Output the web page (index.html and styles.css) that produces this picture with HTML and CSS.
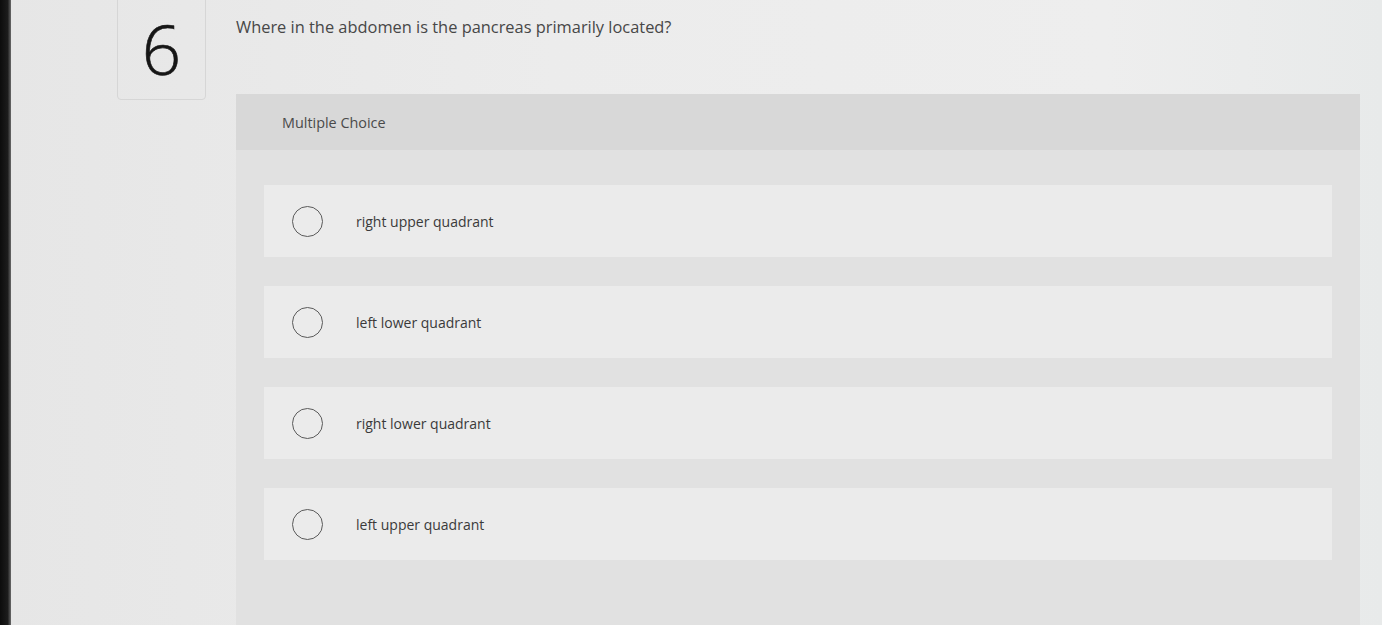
FILE: index.html
```html
<!DOCTYPE html>
<html>
<head>
<meta charset="utf-8">
<link rel="stylesheet" href="styles.css">
</head>
<body>
<div class="screen">
  <div class="edge"></div>
  <div class="main">
    <div class="num-col">
      <div class="num-box">6</div>
    </div>
    <div class="content">
      <div class="question">Where in the abdomen is the pancreas primarily located?</div>
      <div class="card">
        <div class="card-head">Multiple Choice</div>
        <div class="options">
          <div class="option"><span class="radio"></span><span class="label">right upper quadrant</span></div>
          <div class="option"><span class="radio"></span><span class="label">left lower quadrant</span></div>
          <div class="option"><span class="radio"></span><span class="label">right lower quadrant</span></div>
          <div class="option"><span class="radio"></span><span class="label">left upper quadrant</span></div>
        </div>
      </div>
    </div>
  </div>
</div>
</body>
</html>
```

FILE: styles.css
```css
* { box-sizing: border-box; }
html, body { margin: 0; padding: 0; }
body {
  width: 1382px;
  height: 625px;
  overflow: hidden;
  font-family: "Open Sans", "Lato", sans-serif;
  background: #e9e9e9;
}
.screen {
  display: flex;
  height: 625px;
  background: linear-gradient(90deg, #e6e6e6 0%, #ececec 40%, #eeeeee 80%, #e8eaea 100%);
}
.edge {
  width: 11px;
  flex: none;
  background: linear-gradient(90deg, #0c0c0c 0%, #1c1c1c 70%, #6a6a6a 100%);
}
.main {
  display: flex;
  flex: 1;
}
.num-col {
  width: 225px;
  flex: none;
  padding-left: 106px;
}
.num-box {
  width: 89px;
  height: 106px;
  margin-top: -6px;
  border: 1px solid #d6d6d6;
  border-radius: 4px;
  display: flex;
  align-items: center;
  justify-content: center;
  font-size: 69px;
  font-weight: 300;
  line-height: 1;
  color: #161616;
  -webkit-text-stroke: 0.6px #161616;
  padding-top: 2px;
}
.content {
  flex: 1;
  display: flex;
  flex-direction: column;
  padding-right: 22px;
}
.question {
  margin-top: 16px;
  font-size: 16.4px;
  color: #474747;
  line-height: 22px;
  height: 22px;
}
.card {
  margin-top: 56px;
  flex: 1;
  background: #e1e1e1;
  display: flex;
  flex-direction: column;
}
.card-head {
  height: 56px;
  background: #d8d8d8;
  padding-left: 46px;
  display: flex;
  align-items: center;
  font-size: 14.4px;
  color: #4a4a4a;
}
.options {
  display: flex;
  flex-direction: column;
  gap: 29px;
  padding: 35px 28px 0 28px;
}
.option {
  height: 72px;
  background: #ebebeb;
  display: flex;
  align-items: center;
  padding-left: 28px;
}
.radio {
  width: 31px;
  height: 31px;
  border: 1.6px solid #5a5a5a;
  border-radius: 50%;
  flex: none;
}
.label {
  margin-left: 33px;
  font-size: 14px;
  color: #3a3a3a;
}
```
